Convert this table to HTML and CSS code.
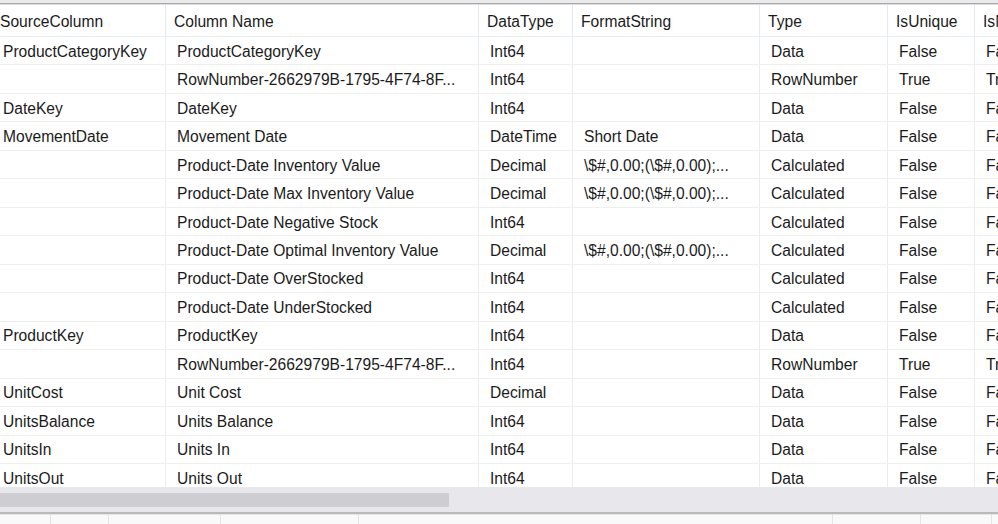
FILE: index.html
```html
<!DOCTYPE html>
<html>
<head>
<meta charset="utf-8">
<link rel="stylesheet" href="styles.css">
</head>
<body>
<div class="panel">
  <div class="topstrip"></div>
  <div class="viewport">
    <div class="grid head">
      <div class="hc">SourceColumn</div>
      <div class="hc">Column Name</div>
      <div class="hc">DataType</div>
      <div class="hc">FormatString</div>
      <div class="hc">Type</div>
      <div class="hc">IsUnique</div>
      <div class="hc last">IsNullable</div>
    </div>
    <div class="body">
      <div class="grid row"><div class="c">ProductCategoryKey</div><div class="c">ProductCategoryKey</div><div class="c">Int64</div><div class="c"></div><div class="c">Data</div><div class="c">False</div><div class="c last">False</div></div>
      <div class="grid row"><div class="c"></div><div class="c">RowNumber-2662979B-1795-4F74-8F...</div><div class="c">Int64</div><div class="c"></div><div class="c">RowNumber</div><div class="c">True</div><div class="c last">True</div></div>
      <div class="grid row"><div class="c">DateKey</div><div class="c">DateKey</div><div class="c">Int64</div><div class="c"></div><div class="c">Data</div><div class="c">False</div><div class="c last">False</div></div>
      <div class="grid row"><div class="c">MovementDate</div><div class="c">Movement Date</div><div class="c">DateTime</div><div class="c">Short Date</div><div class="c">Data</div><div class="c">False</div><div class="c last">False</div></div>
      <div class="grid row"><div class="c"></div><div class="c">Product-Date Inventory Value</div><div class="c">Decimal</div><div class="c">\$#,0.00;(\$#,0.00);...</div><div class="c">Calculated</div><div class="c">False</div><div class="c last">False</div></div>
      <div class="grid row"><div class="c"></div><div class="c">Product-Date Max Inventory Value</div><div class="c">Decimal</div><div class="c">\$#,0.00;(\$#,0.00);...</div><div class="c">Calculated</div><div class="c">False</div><div class="c last">False</div></div>
      <div class="grid row"><div class="c"></div><div class="c">Product-Date Negative Stock</div><div class="c">Int64</div><div class="c"></div><div class="c">Calculated</div><div class="c">False</div><div class="c last">False</div></div>
      <div class="grid row"><div class="c"></div><div class="c">Product-Date Optimal Inventory Value</div><div class="c">Decimal</div><div class="c">\$#,0.00;(\$#,0.00);...</div><div class="c">Calculated</div><div class="c">False</div><div class="c last">False</div></div>
      <div class="grid row"><div class="c"></div><div class="c">Product-Date OverStocked</div><div class="c">Int64</div><div class="c"></div><div class="c">Calculated</div><div class="c">False</div><div class="c last">False</div></div>
      <div class="grid row"><div class="c"></div><div class="c">Product-Date UnderStocked</div><div class="c">Int64</div><div class="c"></div><div class="c">Calculated</div><div class="c">False</div><div class="c last">False</div></div>
      <div class="grid row"><div class="c">ProductKey</div><div class="c">ProductKey</div><div class="c">Int64</div><div class="c"></div><div class="c">Data</div><div class="c">False</div><div class="c last">False</div></div>
      <div class="grid row"><div class="c"></div><div class="c">RowNumber-2662979B-1795-4F74-8F...</div><div class="c">Int64</div><div class="c"></div><div class="c">RowNumber</div><div class="c">True</div><div class="c last">True</div></div>
      <div class="grid row"><div class="c">UnitCost</div><div class="c">Unit Cost</div><div class="c">Decimal</div><div class="c"></div><div class="c">Data</div><div class="c">False</div><div class="c last">False</div></div>
      <div class="grid row"><div class="c">UnitsBalance</div><div class="c">Units Balance</div><div class="c">Int64</div><div class="c"></div><div class="c">Data</div><div class="c">False</div><div class="c last">False</div></div>
      <div class="grid row"><div class="c">UnitsIn</div><div class="c">Units In</div><div class="c">Int64</div><div class="c"></div><div class="c">Data</div><div class="c">False</div><div class="c last">False</div></div>
      <div class="grid row"><div class="c">UnitsOut</div><div class="c">Units Out</div><div class="c">Int64</div><div class="c"></div><div class="c">Data</div><div class="c">False</div><div class="c last">False</div></div>
    </div>
  </div>
  <div class="hscroll"><div class="thumb"></div></div>
  <div class="sep"></div>
  <div class="nextgrid">
    <div class="ng" style="width:50px"></div>
    <div class="ng" style="width:57px"></div>
    <div class="ng" style="width:111px"></div>
    <div class="ng" style="width:137px"></div>
    <div class="ng" style="width:473px"></div>
    <div class="ng" style="width:87px"></div>
    <div class="ng" style="width:70px"></div>
  </div>
</div>
</body>
</html>
```

FILE: styles.css
```css
html, body {
  margin: 0;
  padding: 0;
  background: #ffffff;
}
body {
  width: 998px;
  height: 524px;
  overflow: hidden;
  font-family: "Liberation Sans", Arial, sans-serif;
  font-size: 15.6px;
  color: #1b1b1b;
}
.panel {
  display: flex;
  flex-direction: column;
  width: 998px;
  height: 524px;
}
.topstrip {
  height: 3px;
  background: #ebebee;
  border-bottom: 1px solid #a9a9a9;
  box-shadow: 0 1px 0 #dcdcdc;
  margin-bottom: 1px;
}
.viewport {
  height: 482px;
  overflow: hidden;
}
.grid {
  display: grid;
  grid-template-columns: 174px 313px 94px 187px 128px 87px 120px;
  margin-left: -8px;
  width: 1103px;
}
.head {
  height: 31px;
  border-bottom: 1px solid #e7edf5;
}
.hc {
  display: flex;
  align-items: center;
  padding-left: 8px;
  padding-top: 3px;
  border-right: 1px solid #e1e9f3;
  white-space: nowrap;
  overflow: hidden;
}
.row {
  height: 28.47px;
  box-sizing: border-box;
  border-bottom: 1px solid #efefef;
}
.c {
  display: flex;
  align-items: center;
  padding-left: 11px;
  padding-top: 2px;
  border-right: 1px solid #ececec;
  white-space: nowrap;
  overflow: hidden;
}
.last {
  border-right: none;
}
.hscroll {
  height: 25px;
  background: #e8e8ec;
  display: flex;
  align-items: center;
}
.thumb {
  width: 449px;
  height: 14px;
  background: #cdcdd2;
}
.sep {
  height: 2px;
  background: #b9b9bc;
  border-bottom: 1px solid #e6e6e6;
}
.nextgrid {
  flex: 1;
  display: flex;
  background: #f9f9f9;
}
.ng {
  border-right: 1px solid #e4e4e4;
  flex: none;
}
```
